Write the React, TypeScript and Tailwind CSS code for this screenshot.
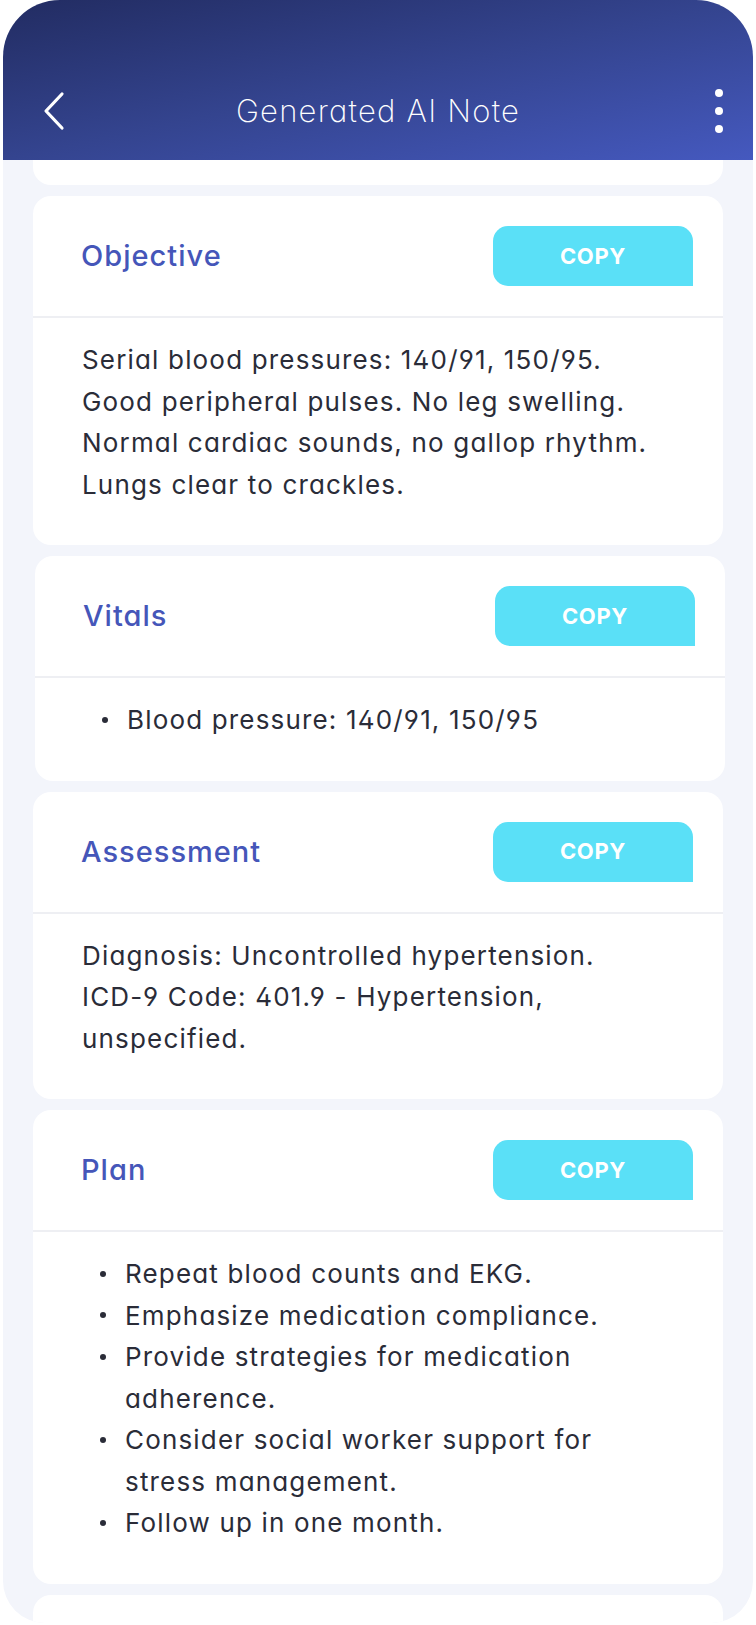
import React from "react";

const font = "font-['Inter','Open_Sans',sans-serif] [font-feature-settings:'cv11','ss01']";

function CopyButton() {
  return (
    <button className="w-[200px] h-[60px] shrink-0 bg-[#5ae0f7] rounded-tl-[15px] rounded-tr-[15px] rounded-bl-[15px] rounded-br-none flex items-center justify-center text-white text-[22px] font-bold tracking-[0.03em]">
      COPY
    </button>
  );
}

function Card({
  title,
  children,
  shift,
}: {
  title: string;
  children: React.ReactNode;
  shift?: boolean;
}) {
  return (
    <div
      className={
        "bg-white rounded-[18px] overflow-hidden " +
        (shift ? "ml-[2px] -mr-[2px]" : "")
      }
    >
      <div className="h-[120px] flex items-center justify-between pl-[48px] pr-[30px]">
        <div className="text-[29px] font-medium text-[#4556b9] tracking-[0.035em]">{title}</div>
        <CopyButton />
      </div>
      <div className="h-[2px] bg-[#eeeff3]" />
      <div className="pl-[49px] pr-[20px] pt-[21px] pb-[40px] text-[26px] leading-[41.5px] tracking-[0.045em] text-[#2a2c38]">
        {children}
      </div>
    </div>
  );
}

function Bullets({ items }: { items: string[] }) {
  return (
    <ul>
      {items.map((t, i) => (
        <li key={i} className="flex">
          <span className="w-[43px] h-[41.5px] shrink-0 flex items-center">
            <span className="ml-[18px] w-[6px] h-[6px] rounded-full bg-[#2a2c38]" />
          </span>
          <span className="max-w-[545px]">{t}</span>
        </li>
      ))}
    </ul>
  );
}

export default function App() {
  return (
    <div className={"w-[756px] h-[1625px] bg-white overflow-hidden " + font}>
      <div className="mx-[3px] h-[1623px] rounded-t-[57px] rounded-b-[42px] bg-[#f3f5fb] overflow-hidden flex flex-col">
        <header className="h-[160px] shrink-0 bg-gradient-to-br from-[#222c62] via-[#34448f] to-[#4559bf] flex items-end pb-[28px]">
          <div className="w-full grid grid-cols-[90px_1fr_90px] items-center h-[44px]">
            <div className="pl-[38px] flex items-center">
              <svg width="26" height="40" viewBox="0 0 26 40" fill="none">
                <path d="M21 3 L5 20 L21 37" stroke="white" strokeWidth="3.2" strokeLinecap="round" strokeLinejoin="round" />
              </svg>
            </div>
            <div className="text-center text-white text-[31px] [font-weight:250] tracking-[0.04em] whitespace-nowrap">
              Generated AI Note
            </div>
            <div className="flex justify-end pr-[30px]">
              <div className="flex flex-col items-center gap-[10px]">
                <span className="w-[8px] h-[8px] rounded-full bg-white" />
                <span className="w-[8px] h-[8px] rounded-full bg-white" />
                <span className="w-[8px] h-[8px] rounded-full bg-white" />
              </div>
            </div>
          </div>
        </header>
        <div className="px-[30px] flex flex-col gap-[11px]">
          <div className="h-[25px] bg-white rounded-b-[18px]" />
          <Card title="Objective">
            <p className="whitespace-nowrap">
              Serial blood pressures: 140/91, 150/95.
              <br />
              Good peripheral pulses. No leg swelling.
              <br />
              Normal cardiac sounds, no gallop rhythm.
              <br />
              Lungs clear to crackles.
            </p>
          </Card>
          <Card title="Vitals" shift>
            <Bullets items={["Blood pressure: 140/91, 150/95"]} />
          </Card>
          <Card title="Assessment">
            <p className="whitespace-nowrap">
              Diagnosis: Uncontrolled hypertension.
              <br />
              ICD-9 Code: 401.9 - Hypertension,
              <br />
              unspecified.
            </p>
          </Card>
          <Card title="Plan">
            <Bullets
              items={[
                "Repeat blood counts and EKG.",
                "Emphasize medication compliance.",
                "Provide strategies for medication adherence.",
                "Consider social worker support for stress management.",
                "Follow up in one month.",
              ]}
            />
          </Card>
          <div className="h-[60px] bg-white rounded-t-[18px]" />
        </div>
      </div>
    </div>
  );
}
